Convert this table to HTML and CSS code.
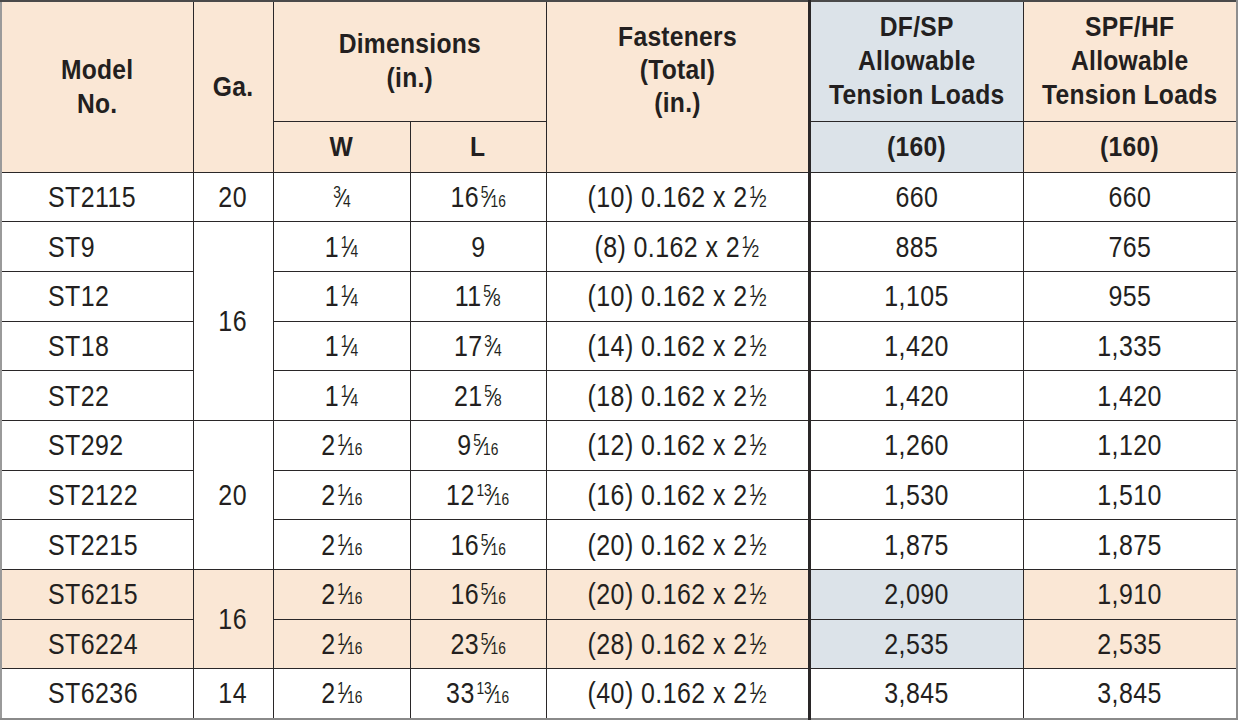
FILE: index.html
```html
<!DOCTYPE html>
<html>
<head>
<meta charset="utf-8">
<link rel="stylesheet" href="styles.css">
</head>
<body>
<table class="loads">
  <colgroup>
    <col class="c-model"><col class="c-ga"><col class="c-w"><col class="c-l"><col class="c-fast"><col class="c-df"><col class="c-spf">
  </colgroup>
  <thead>
    <tr class="h1">
      <th rowspan="2" class="tan"><span class="t">Model<br>No.</span></th>
      <th rowspan="2" class="tan"><span class="t">Ga.</span></th>
      <th colspan="2" class="tan"><span class="t">Dimensions<br>(in.)</span></th>
      <th rowspan="2" class="tan fast"><span class="t">Fasteners<br>(Total)<br>(in.)</span></th>
      <th class="blue df"><span class="t">DF/SP<br>Allowable<br>Tension Loads</span></th>
      <th class="tan"><span class="t">SPF/HF<br>Allowable<br>Tension Loads</span></th>
    </tr>
    <tr class="h2">
      <th class="tan"><span class="t">W</span></th>
      <th class="tan lgray"><span class="t">L</span></th>
      <th class="blue df"><span class="t">(160)</span></th>
      <th class="tan"><span class="t">(160)</span></th>
    </tr>
  </thead>
  <tbody>
    <tr>
      <td class="model"><span class="t">ST2115</span></td><td class="ga"><span class="t">20</span></td>
      <td><span class="t"><span class="fr"><span class="n">3</span><span class="s">⁄</span><span class="d">4</span></span></span></td>
      <td class="lgray"><span class="t">16<span class="fr"><span class="n">5</span><span class="s">⁄</span><span class="d">16</span></span></span></td>
      <td><span class="t">(10) 0.162 x 2<span class="fr"><span class="n">1</span><span class="s">⁄</span><span class="d">2</span></span></span></td>
      <td class="df"><span class="t">660</span></td><td><span class="t">660</span></td>
    </tr>
    <tr>
      <td class="model"><span class="t">ST9</span></td><td class="ga" rowspan="4"><span class="t">16</span></td>
      <td><span class="t">1<span class="fr"><span class="n">1</span><span class="s">⁄</span><span class="d">4</span></span></span></td>
      <td class="lgray"><span class="t">9</span></td>
      <td><span class="t">(8) 0.162 x 2<span class="fr"><span class="n">1</span><span class="s">⁄</span><span class="d">2</span></span></span></td>
      <td class="df"><span class="t">885</span></td><td><span class="t">765</span></td>
    </tr>
    <tr>
      <td class="model"><span class="t">ST12</span></td>
      <td><span class="t">1<span class="fr"><span class="n">1</span><span class="s">⁄</span><span class="d">4</span></span></span></td>
      <td class="lgray"><span class="t">11<span class="fr"><span class="n">5</span><span class="s">⁄</span><span class="d">8</span></span></span></td>
      <td><span class="t">(10) 0.162 x 2<span class="fr"><span class="n">1</span><span class="s">⁄</span><span class="d">2</span></span></span></td>
      <td class="df"><span class="t">1,105</span></td><td><span class="t">955</span></td>
    </tr>
    <tr>
      <td class="model"><span class="t">ST18</span></td>
      <td><span class="t">1<span class="fr"><span class="n">1</span><span class="s">⁄</span><span class="d">4</span></span></span></td>
      <td class="lgray"><span class="t">17<span class="fr"><span class="n">3</span><span class="s">⁄</span><span class="d">4</span></span></span></td>
      <td><span class="t">(14) 0.162 x 2<span class="fr"><span class="n">1</span><span class="s">⁄</span><span class="d">2</span></span></span></td>
      <td class="df"><span class="t">1,420</span></td><td><span class="t">1,335</span></td>
    </tr>
    <tr>
      <td class="model"><span class="t">ST22</span></td>
      <td><span class="t">1<span class="fr"><span class="n">1</span><span class="s">⁄</span><span class="d">4</span></span></span></td>
      <td class="lgray"><span class="t">21<span class="fr"><span class="n">5</span><span class="s">⁄</span><span class="d">8</span></span></span></td>
      <td><span class="t">(18) 0.162 x 2<span class="fr"><span class="n">1</span><span class="s">⁄</span><span class="d">2</span></span></span></td>
      <td class="df"><span class="t">1,420</span></td><td><span class="t">1,420</span></td>
    </tr>
    <tr>
      <td class="model"><span class="t">ST292</span></td><td class="ga" rowspan="3"><span class="t">20</span></td>
      <td><span class="t">2<span class="fr"><span class="n">1</span><span class="s">⁄</span><span class="d">16</span></span></span></td>
      <td class="lgray"><span class="t">9<span class="fr"><span class="n">5</span><span class="s">⁄</span><span class="d">16</span></span></span></td>
      <td><span class="t">(12) 0.162 x 2<span class="fr"><span class="n">1</span><span class="s">⁄</span><span class="d">2</span></span></span></td>
      <td class="df"><span class="t">1,260</span></td><td><span class="t">1,120</span></td>
    </tr>
    <tr>
      <td class="model"><span class="t">ST2122</span></td>
      <td><span class="t">2<span class="fr"><span class="n">1</span><span class="s">⁄</span><span class="d">16</span></span></span></td>
      <td class="lgray"><span class="t">12<span class="fr"><span class="n">13</span><span class="s">⁄</span><span class="d">16</span></span></span></td>
      <td><span class="t">(16) 0.162 x 2<span class="fr"><span class="n">1</span><span class="s">⁄</span><span class="d">2</span></span></span></td>
      <td class="df"><span class="t">1,530</span></td><td><span class="t">1,510</span></td>
    </tr>
    <tr>
      <td class="model"><span class="t">ST2215</span></td>
      <td><span class="t">2<span class="fr"><span class="n">1</span><span class="s">⁄</span><span class="d">16</span></span></span></td>
      <td class="lgray"><span class="t">16<span class="fr"><span class="n">5</span><span class="s">⁄</span><span class="d">16</span></span></span></td>
      <td><span class="t">(20) 0.162 x 2<span class="fr"><span class="n">1</span><span class="s">⁄</span><span class="d">2</span></span></span></td>
      <td class="df"><span class="t">1,875</span></td><td><span class="t">1,875</span></td>
    </tr>
    <tr class="hl">
      <td class="model"><span class="t">ST6215</span></td><td class="ga" rowspan="2"><span class="t">16</span></td>
      <td><span class="t">2<span class="fr"><span class="n">1</span><span class="s">⁄</span><span class="d">16</span></span></span></td>
      <td class="lgray"><span class="t">16<span class="fr"><span class="n">5</span><span class="s">⁄</span><span class="d">16</span></span></span></td>
      <td><span class="t">(20) 0.162 x 2<span class="fr"><span class="n">1</span><span class="s">⁄</span><span class="d">2</span></span></span></td>
      <td class="df"><span class="t">2,090</span></td><td><span class="t">1,910</span></td>
    </tr>
    <tr class="hl hl2">
      <td class="model"><span class="t">ST6224</span></td>
      <td><span class="t">2<span class="fr"><span class="n">1</span><span class="s">⁄</span><span class="d">16</span></span></span></td>
      <td class="lgray"><span class="t">23<span class="fr"><span class="n">5</span><span class="s">⁄</span><span class="d">16</span></span></span></td>
      <td><span class="t">(28) 0.162 x 2<span class="fr"><span class="n">1</span><span class="s">⁄</span><span class="d">2</span></span></span></td>
      <td class="df"><span class="t">2,535</span></td><td><span class="t">2,535</span></td>
    </tr>
    <tr class="last">
      <td class="model"><span class="t">ST6236</span></td><td class="ga"><span class="t">14</span></td>
      <td><span class="t">2<span class="fr"><span class="n">1</span><span class="s">⁄</span><span class="d">16</span></span></span></td>
      <td class="lgray"><span class="t">33<span class="fr"><span class="n">13</span><span class="s">⁄</span><span class="d">16</span></span></span></td>
      <td><span class="t">(40) 0.162 x 2<span class="fr"><span class="n">1</span><span class="s">⁄</span><span class="d">2</span></span></span></td>
      <td class="df"><span class="t">3,845</span></td><td><span class="t">3,845</span></td>
    </tr>
    <tr class="hl next">
      <td class="model"></td><td class="ga"></td><td></td><td class="lgray"></td><td></td><td class="df"></td><td></td>
    </tr>
  </tbody>
</table>
</body>
</html>
```

FILE: styles.css
```css
html, body {
  margin: 0;
  padding: 0;
  background: #ffffff;
  overflow: hidden;
}

body {
  font-family: "Liberation Sans", Arial, sans-serif;
  color: #231f20;
}

.loads {
  border-collapse: collapse;
  table-layout: fixed;
  width: 1236px;
  border-left: 2px solid #9a9a9a;
  border-right: 2px solid #8e8e8e;
  border-top: 2px solid #4a4a4a;
}

.c-model { width: 192px; }
.c-ga { width: 80px; }
.c-w { width: 137px; }
.c-l { width: 136px; }
.c-fast { width: 263px; }
.c-df { width: 214px; }
.c-spf { width: 214px; }

.loads th,
.loads td {
  border: 1px solid #2a2728;
  padding: 0;
  text-align: center;
  vertical-align: middle;
  white-space: nowrap;
}

/* condensed look: scale the text horizontally around its centre */
.t {
  display: inline-block;
  transform: scaleX(0.86);
  transform-origin: center center;
}

.loads th {
  font-weight: bold;
  font-size: 28px;
  line-height: 34px;
  letter-spacing: 0.3px;
}

.loads th .t { transform: scaleX(0.88); }

.h1 { height: 120px; }
.h2 { height: 51px; }

.h2 th { line-height: 30px; }

.loads th.fast {
  vertical-align: top;
  padding-top: 18px;
  line-height: 33px;
}

.tan { background: #fae7d5; }
.blue { background: #dce3e9; }

.loads .lgray { border-left: 1px solid #8a8a8a; }

.loads .df { border-left: 3px solid #2a2728; }

.loads td {
  font-size: 29px;
  line-height: 30px;
  letter-spacing: 0.5px;
}

.loads tbody tr { height: 49.7px; }

.loads td.model {
  text-align: left;
  padding-left: 46px;
}
.loads td.model .t { transform-origin: left center; }

.hl td { background: #fae7d5; }
.hl td.df { background: #dce3e9; }

.loads .hl2 td { border-top-color: #7a7a7a; }
.loads .last td { border-bottom: 2px solid #8a8a8a; }
.loads .hl2 td.ga { border-top-color: #2a2728; }

/* stacked fractions */
.fr {
  letter-spacing: 0;
  line-height: 0;
  margin-left: 2px;
}
.fr .n {
  font-size: 16px;
  vertical-align: 9px;
}
.fr .s {
  font-size: 26px;
  margin: 0 -1px;
}
.fr .d {
  font-size: 16px;
}
```
